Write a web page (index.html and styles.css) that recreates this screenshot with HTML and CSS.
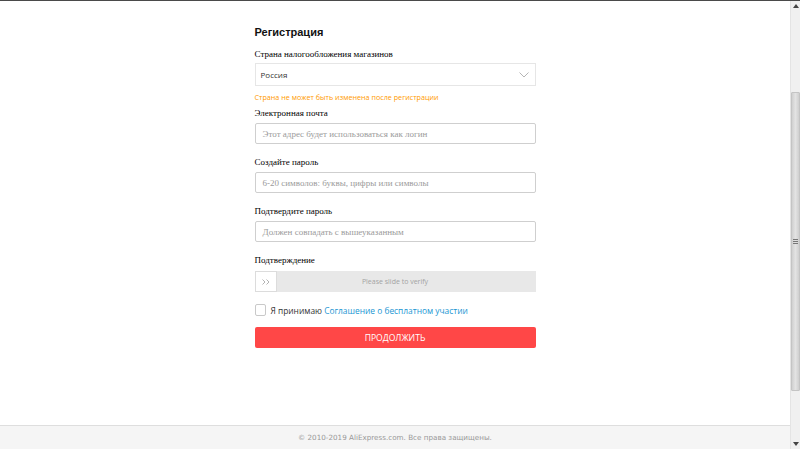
FILE: index.html
```html
<!DOCTYPE html>
<html lang="ru">
<head>
<meta charset="utf-8">
<title>Регистрация</title>
<link rel="stylesheet" href="styles.css">
</head>
<body>
<div class="viewport">
  <div class="page">
    <main class="main">
      <form class="form">
        <h1 class="title">Регистрация</h1>
        <label class="label">Страна налогообложения магазинов</label>
        <div class="select">
          <span class="select-value">Россия</span>
          <svg class="chevron" width="10" height="6" viewBox="0 0 10 6"><path d="M0.5 0.5 L5 5 L9.5 0.5" fill="none" stroke="#b5b5b5" stroke-width="1"/></svg>
        </div>
        <div class="note">Страна не может быть изменена после регистрации</div>
        <label class="label label-first">Электронная почта</label>
        <div class="input"><span class="ph">Этот адрес будет использоваться как логин</span></div>
        <label class="label label-gap">Создайте пароль</label>
        <div class="input"><span class="ph">6-20 символов: буквы, цифры или символы</span></div>
        <label class="label label-gap">Подтвердите пароль</label>
        <div class="input"><span class="ph">Должен совпадать с вышеуказанным</span></div>
        <label class="label label-gap">Подтверждение</label>
        <div class="slider">
          <div class="handle">
            <svg width="8" height="6" viewBox="0 0 8 6"><path d="M0.5 0.5 L3 3 L0.5 5.5 M4.5 0.5 L7 3 L4.5 5.5" fill="none" stroke="#aaa" stroke-width="0.9"/></svg>
          </div>
          <span class="slider-text">Please slide to verify</span>
        </div>
        <div class="agree">
          <span class="checkbox"></span>
          <span>Я принимаю <a class="link">Соглашение о бесплатном участии</a></span>
        </div>
        <button type="button" class="btn">ПРОДОЛЖИТЬ</button>
      </form>
    </main>
    <footer class="footer">© 2010-2019 AliExpress.com. Все права защищены.</footer>
  </div>
  <div class="scrollbar">
    <div class="sb-arrow sb-up">
      <svg width="6" height="4" viewBox="0 0 6 4"><path d="M3 0 L6 4 L0 4 Z" fill="#444"/></svg>
    </div>
    <div class="sb-track">
      <div class="sb-thumb">
        <div class="grip"></div>
      </div>
    </div>
    <div class="sb-arrow sb-down">
      <svg width="6" height="4" viewBox="0 0 6 4"><path d="M0 0 L6 0 L3 4 Z" fill="#444"/></svg>
    </div>
  </div>
</div>
</body>
</html>
```
FILE: styles.css
```css
* { box-sizing: border-box; }
html, body { margin: 0; padding: 0; }
body {
  width: 800px;
  height: 449px;
  overflow: hidden;
  background: #fff;
  font-family: "Open Sans", "Liberation Sans", sans-serif;
}
.viewport {
  display: flex;
  height: 449px;
  border-top: 1px solid #4a4a4a;
}
.page {
  width: 790px;
  display: flex;
  flex-direction: column;
}
.main {
  flex: 1;
  display: flex;
  justify-content: center;
}
.form {
  width: 281px;
  padding-top: 23px;
  display: flex;
  flex-direction: column;
}
.title {
  margin: 0 0 8px;
  font-family: "Liberation Sans", Arial, sans-serif;
  font-weight: bold;
  font-size: 11px;
  line-height: 16px;
  color: #111;
}
.label {
  display: block;
  font-family: "Liberation Serif", "Times New Roman", serif;
  font-size: 9px;
  line-height: 12px;
  color: #000;
  margin-bottom: 3px;
}
.label-first { margin-top: 4px; margin-bottom: 4px; }
.label-gap { margin-top: 12px; margin-bottom: 4px; }
.select {
  height: 23px;
  border: 1px solid #e6e6e6;
  display: flex;
  align-items: center;
  justify-content: space-between;
  padding: 0 6px 0 5px;
}
.select-value {
  font-size: 8px;
  color: #333;
}
.note {
  margin-top: 5px;
  font-size: 7.2px;
  line-height: 12px;
  color: #ff9a00;
}
.input {
  height: 21px;
  border: 1px solid #cfcfcf;
  border-radius: 2px;
  display: flex;
  align-items: center;
  padding-left: 7px;
}
.ph {
  font-family: "Liberation Serif", "Times New Roman", serif;
  font-size: 9px;
  color: #9a9a9a;
}
.slider {
  position: relative;
  height: 21px;
  margin-top: 1px;
  background: #e8e8e8;
  display: flex;
  align-items: center;
}
.handle {
  width: 22px;
  height: 21px;
  background: #fff;
  border: 1px solid #dcdcdc;
  display: flex;
  align-items: center;
  justify-content: center;
  z-index: 1;
}
.slider-text {
  position: absolute;
  left: 0;
  right: 0;
  text-align: center;
  font-size: 7px;
  color: #a3a3a3;
}
.agree {
  margin-top: 11px;
  height: 14px;
  display: flex;
  align-items: center;
  gap: 5px;
  font-size: 8.4px;
  color: #333;
}
.checkbox {
  width: 11px;
  height: 12px;
  border: 1px solid #c9c9c9;
  border-radius: 2px;
  background: #fff;
}
.link { color: #2196d3; }
.btn {
  margin-top: 10px;
  height: 21px;
  border: 0;
  border-radius: 2px;
  background: #ff4747;
  color: #fff;
  font-family: "Open Sans", "Liberation Sans", sans-serif;
  font-size: 8.6px;
  padding: 0;
}
.footer {
  height: 24px;
  border-top: 1px solid #dedede;
  background: #f5f5f5;
  color: #999;
  font-family: "DejaVu Sans", Verdana, sans-serif;
  font-size: 7.2px;
  display: flex;
  align-items: center;
  justify-content: center;
}
.scrollbar {
  width: 10px;
  display: flex;
  flex-direction: column;
  background: #f0f0f0;
  border-left: 1px solid #e4e4e4;
}
.sb-arrow {
  height: 10px;
  display: flex;
  align-items: center;
  justify-content: center;
}
.sb-track {
  flex: 1;
  display: flex;
  flex-direction: column;
  padding-top: 81px;
  padding-bottom: 48px;
}
.sb-thumb {
  flex: 1;
  background: linear-gradient(to right, #d0d0d0, #e3e3e3 50%, #cfcfcf);
  border: 1px solid #c4c4c4;
  border-radius: 1px;
  display: flex;
  align-items: center;
  justify-content: center;
}
.grip {
  width: 5px;
  height: 5px;
  border-top: 1px solid #777;
  border-bottom: 1px solid #777;
  position: relative;
}
.grip::after {
  content: "";
  position: absolute;
  left: 0;
  right: 0;
  top: 1px;
  border-top: 1px solid #777;
}
```
